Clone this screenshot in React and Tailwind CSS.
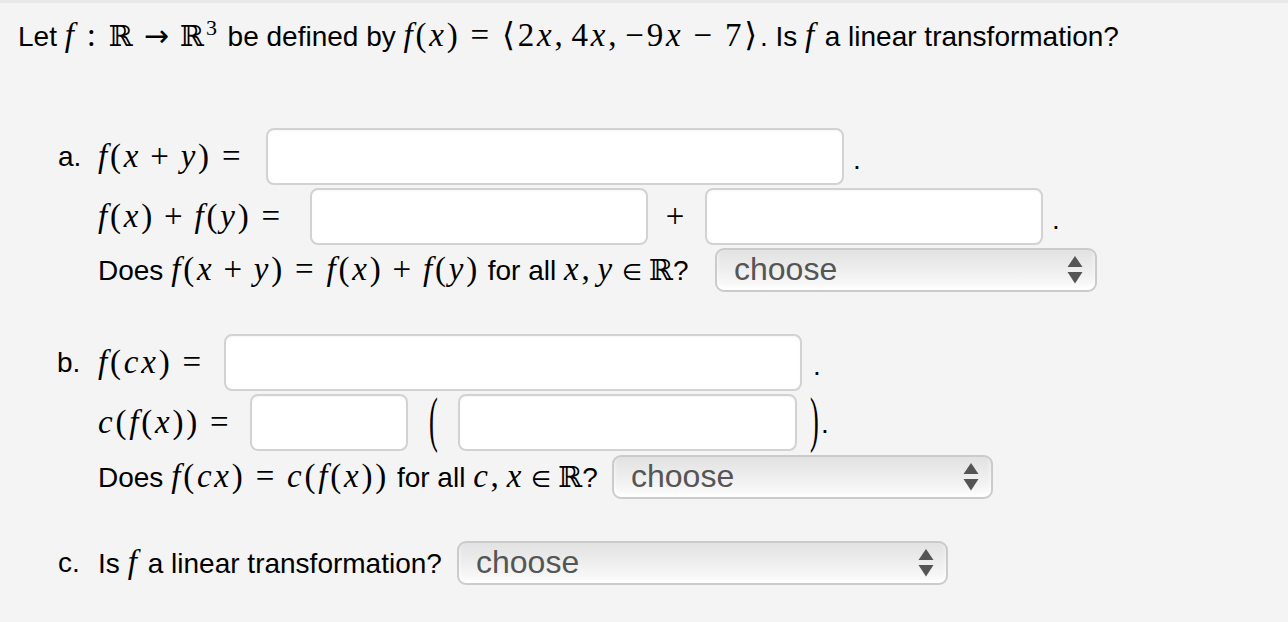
import React from "react";

const M = ({ children }) => (
  <span className="font-['Liberation_Serif','DejaVu_Serif',serif] text-[33px] tracking-[2.8px] whitespace-nowrap">{children}</span>
);
const V = ({ children }) => <i className="italic">{children}</i>;
const Op = ({ children }) => <span className="mx-[10px]">{children}</span>;
const Sm = ({ children }) => <span className="mx-[9px]">{children}</span>;
const Arr = () => <span className="mx-[11px] font-['DejaVu_Sans',sans-serif] text-[30px] tracking-normal">→</span>;
const In = () => <span className="mx-[7px] font-['DejaVu_Sans',sans-serif] text-[23px] tracking-normal">∈</span>;
const BB = () => <span className="font-['DejaVu_Serif',serif] text-[29px] tracking-normal">ℝ</span>;

const Arrows = () => (
  <svg width="16" height="30" viewBox="0 0 16 30" className="shrink-0">
    <polygon points="8,1 15.5,12 0.5,12" fill="#555" />
    <polygon points="0.5,17 15.5,17 8,28.5" fill="#555" />
  </svg>
);

const Select = ({ className }) => (
  <div
    className={
      "h-[44px] shrink-0 flex items-center justify-between pl-[17px] pr-[12px] rounded-[9px] border-2 border-[#cbcbcb] bg-gradient-to-b from-[#e2e2e2] via-[#eeeeee] to-[#fcfcfc] shadow-[inset_0_-3px_4px_rgba(255,255,255,0.9)] text-[32px] text-[#555] " +
      className
    }
  >
    <span className="leading-none pb-[2px]">choose</span>
    <Arrows />
  </div>
);

const Input = ({ className }) => (
  <div
    className={
      "h-[57px] shrink-0 bg-white border-2 border-[#d2d2d2] rounded-[8px] shadow-[inset_0_1px_2px_rgba(0,0,0,0.04)] " +
      className
    }
  />
);

const Paren = ({ children }) => (
  <span className="inline-block font-['Liberation_Serif','DejaVu_Serif',serif] text-[33px] leading-none scale-y-[1.85] scale-x-[0.8]">
    {children}
  </span>
);

export default function App() {
  return (
    <div className="min-h-[622px] w-full bg-[#f4f4f4] border-t-[3px] border-[#e8e8e8] font-['Liberation_Sans',Arial,sans-serif] text-[28px] text-black">
      {/* header */}
      <div className="pt-[13px] pl-[18px] leading-[38px] whitespace-nowrap">
        Let{" "}
        <M>
          <V>f</V>
          <Op>:</Op>
          <BB />
          <Arr />
          <BB />
          <sup className="ml-[2px] text-[22px] font-['Liberation_Serif',serif]">3</sup>
        </M>{" "}
        be defined by{" "}
        <M>
          <V>f</V>(<V>x</V>)<Op>=</Op>⟨2<V>x</V>,<span className="ml-[6px]">4</span>
          <V>x</V>,<span className="ml-[6px]">−9</span>
          <V>x</V>
          <Op>−</Op>7⟩
        </M>
        . Is <M><V>f</V></M> a linear transformation?
      </div>

      {/* part a */}
      <div className="mt-[72px] pl-[58px] flex">
        <div className="w-[40px] h-[57px] flex items-center">a.</div>
        <div className="flex flex-col gap-[3px]">
          <div className="h-[57px] flex items-center">
            <div className="w-[168px] shrink-0">
              <M>
                <V>f</V>(<V>x</V>
                <Sm>+</Sm>
                <V>y</V>)<Op>=</Op>
              </M>
            </div>
            <Input className="w-[578px]" />
            <span className="ml-[9px] pt-[6px]">.</span>
          </div>
          <div className="h-[57px] flex items-center">
            <div className="w-[212px] shrink-0">
              <M>
                <V>f</V>(<V>x</V>)<Sm>+</Sm>
                <V>f</V>(<V>y</V>)<Op>=</Op>
              </M>
            </div>
            <Input className="w-[338px]" />
            <div className="w-[57px] text-center">
              <M>+</M>
            </div>
            <Input className="w-[338px]" />
            <span className="ml-[9px] pt-[6px]">.</span>
          </div>
          <div className="h-[44px] flex items-center">
            <div className="w-[617px] shrink-0 whitespace-nowrap">
              Does{" "}
              <M>
                <V>f</V>(<V>x</V>
                <Sm>+</Sm>
                <V>y</V>)<Op>=</Op>
                <V>f</V>(<V>x</V>)<Sm>+</Sm>
                <V>f</V>(<V>y</V>)
              </M>{" "}
              for all{" "}
              <M>
                <V>x</V>,<span className="ml-[5px]" />
                <V>y</V>
                <In />
                <BB />
              </M>
              ?
            </div>
            <Select className="w-[382px]" />
          </div>
        </div>
      </div>

      {/* part b */}
      <div className="mt-[42px] pl-[57px] flex">
        <div className="w-[41px] h-[57px] flex items-center">b.</div>
        <div className="flex flex-col gap-[3px]">
          <div className="h-[57px] flex items-center">
            <div className="w-[126px] shrink-0">
              <M>
                <V>f</V>(<V>cx</V>)<Op>=</Op>
              </M>
            </div>
            <Input className="w-[578px]" />
            <span className="ml-[11px] pt-[6px]">.</span>
          </div>
          <div className="h-[57px] flex items-center">
            <div className="w-[152px] shrink-0">
              <M>
                <V>c</V>(<V>f</V>(<V>x</V>))<Op>=</Op>
              </M>
            </div>
            <Input className="w-[158px]" />
            <div className="w-[50px] flex justify-center pb-[4px]">
              <Paren>(</Paren>
            </div>
            <Input className="w-[339px]" />
            <div className="ml-[12px] flex items-center pb-[4px]">
              <Paren>)</Paren>
              <span className="ml-[1px] pt-[6px]">.</span>
            </div>
          </div>
          <div className="h-[44px] mt-[1px] flex items-center">
            <div className="w-[514px] shrink-0 whitespace-nowrap">
              Does{" "}
              <M>
                <V>f</V>(<V>cx</V>)<Op>=</Op>
                <V>c</V>(<V>f</V>(<V>x</V>))
              </M>{" "}
              for all{" "}
              <M>
                <V>c</V>,<span className="ml-[5px]" />
                <V>x</V>
                <In />
                <BB />
              </M>
              ?
            </div>
            <Select className="w-[381px]" />
          </div>
        </div>
      </div>

      {/* part c */}
      <div className="mt-[42px] pl-[58px] flex items-center h-[44px]">
        <div className="w-[40px]">c.</div>
        <div className="w-[359px] shrink-0 whitespace-nowrap">
          Is<span className="mx-[8px]"><M><V>f</V></M></span>a linear transformation?
        </div>
        <Select className="w-[491px]" />
      </div>
    </div>
  );
}
